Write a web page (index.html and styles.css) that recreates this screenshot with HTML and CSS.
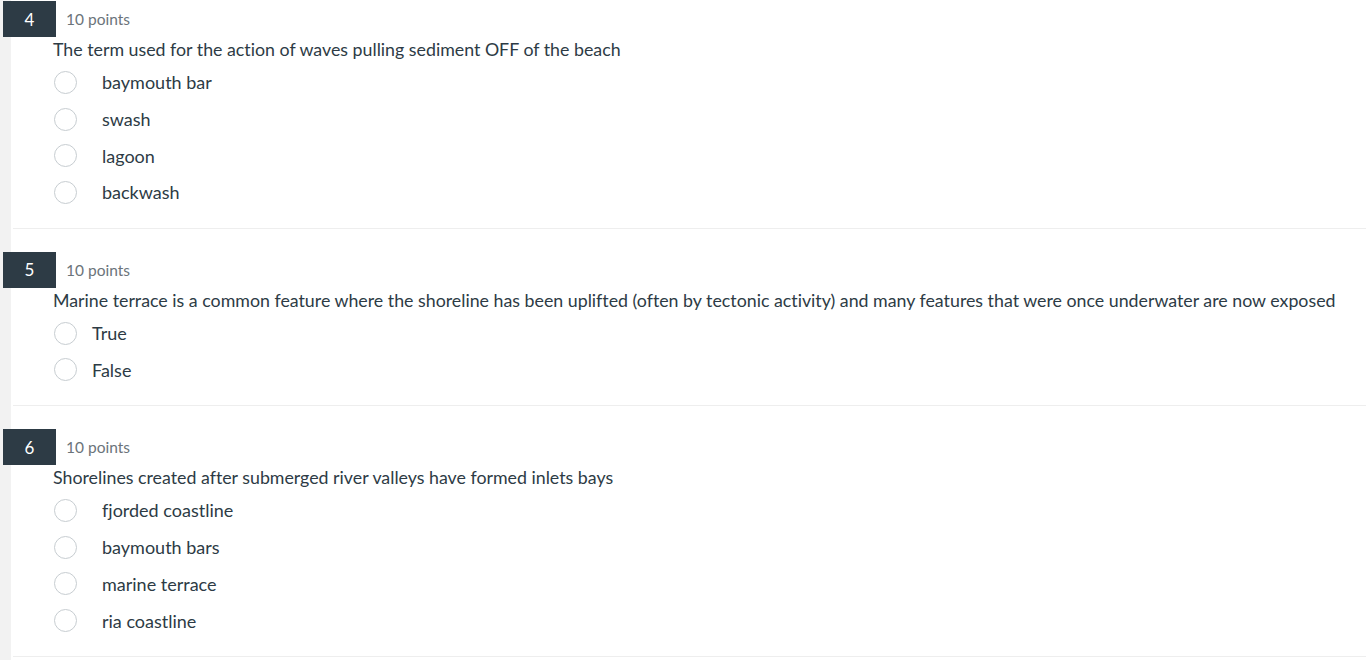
FILE: index.html
```html
<!DOCTYPE html>
<html>
<head>
<meta charset="utf-8">
<link rel="stylesheet" href="styles.css">
</head>
<body>
<div class="page">
  <div class="question">
    <div class="q-header"><div class="badge">4</div><div class="points">10 points</div></div>
    <div class="q-text">The term used for the action of waves pulling sediment OFF of the beach</div>
    <div class="options">
      <div class="option"><span class="radio"></span><span class="label">baymouth bar</span></div>
      <div class="option"><span class="radio"></span><span class="label">swash</span></div>
      <div class="option"><span class="radio"></span><span class="label">lagoon</span></div>
      <div class="option"><span class="radio"></span><span class="label">backwash</span></div>
    </div>
  </div>
  <div class="question">
    <div class="q-header"><div class="badge">5</div><div class="points">10 points</div></div>
    <div class="q-text">Marine terrace is a common feature where the shoreline has been uplifted (often by tectonic activity) and many features that were once underwater are now exposed</div>
    <div class="options tf">
      <div class="option"><span class="radio"></span><span class="label">True</span></div>
      <div class="option"><span class="radio"></span><span class="label">False</span></div>
    </div>
  </div>
  <div class="question">
    <div class="q-header"><div class="badge">6</div><div class="points">10 points</div></div>
    <div class="q-text">Shorelines created after submerged river valleys have formed inlets bays</div>
    <div class="options">
      <div class="option"><span class="radio"></span><span class="label">fjorded coastline</span></div>
      <div class="option"><span class="radio"></span><span class="label">baymouth bars</span></div>
      <div class="option"><span class="radio"></span><span class="label">marine terrace</span></div>
      <div class="option"><span class="radio"></span><span class="label">ria coastline</span></div>
    </div>
  </div>
</div>
</body>
</html>
```

FILE: styles.css
```css
html, body {
  margin: 0;
  padding: 0;
  background: #ffffff;
}
body {
  font-family: Lato, "Open Sans", "Liberation Sans", sans-serif;
  font-variant-ligatures: none;
  color: #2d3b45;
  overflow: hidden;
}
.page {
  border-left: 11px solid #f2f2f2;
  min-height: 660px;
  box-sizing: border-box;
}
.question {
  border-bottom: 1px solid #eeeeee;
  margin-left: 2px;
  padding-top: 23px;
  padding-bottom: 17px;
}
.question:first-child {
  padding-top: 1px;
}
.q-header {
  display: flex;
  align-items: center;
  height: 36px;
}
.badge {
  margin-left: -10px;
  width: 53px;
  height: 36px;
  background: #2d3b45;
  color: #ffffff;
  font-size: 17px;
  display: flex;
  align-items: center;
  justify-content: center;
}
.points {
  margin-left: 10px;
  font-size: 15.5px;
  color: #6b747a;
}
.q-text {
  padding-left: 40px;
  font-size: 17.8px;
  line-height: 24px;
  margin-bottom: 3px;
  white-space: nowrap;
}
.options {
  padding-left: 41px;
}
.option {
  display: flex;
  align-items: center;
  height: 36.7px;
}
.radio {
  box-sizing: border-box;
  width: 23px;
  height: 23px;
  border: 1px solid #c7cdd1;
  border-radius: 50%;
  background: #fff;
  flex: none;
}
.label {
  margin-left: 25px;
  font-size: 18px;
}
.tf .label {
  margin-left: 15px;
}
```
